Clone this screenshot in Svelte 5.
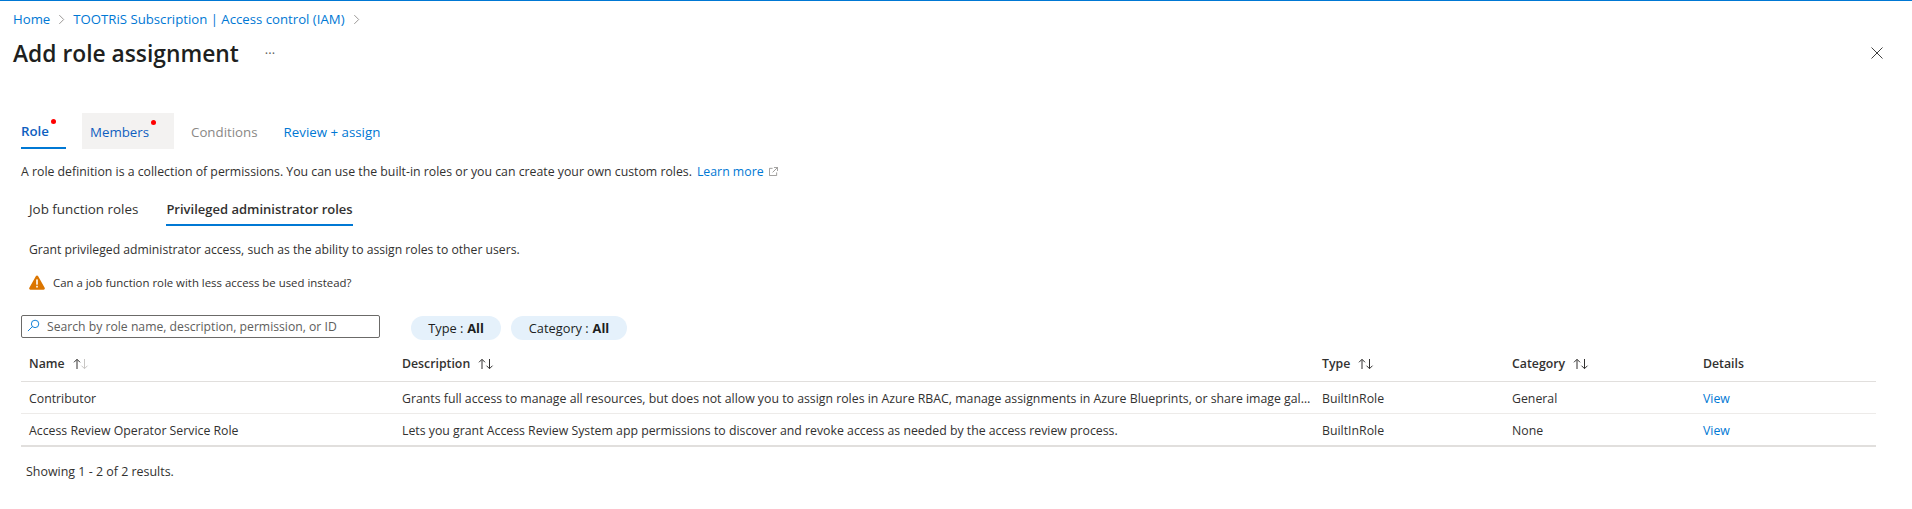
<script lang="ts">
  const tabs = [
    { label: 'Role', dot: true, cls: 'active' },
    { label: 'Members', dot: true, cls: 'hover' },
    { label: 'Conditions', dot: false, cls: 'off' },
    { label: 'Review + assign', dot: false, cls: 'review' }
  ];

  const columns = [
    { label: 'Name', sort: true, faint: true },
    { label: 'Description', sort: true, faint: false },
    { label: 'Type', sort: true, faint: false },
    { label: 'Category', sort: true, faint: false },
    { label: 'Details', sort: false, faint: false }
  ];

  const roles = [
    {
      name: 'Contributor',
      description:
        'Grants full access to manage all resources, but does not allow you to assign roles in Azure RBAC, manage assignments in Azure Blueprints, or share image galleries.',
      type: 'BuiltInRole',
      category: 'General'
    },
    {
      name: 'Access Review Operator Service Role',
      description:
        'Lets you grant Access Review System app permissions to discover and revoke access as needed by the access review process.',
      type: 'BuiltInRole',
      category: 'None'
    }
  ];
</script>

<div class="page">
  <nav class="crumbs">
    <a href="#home">Home</a>
    <svg class="chev" viewBox="0 0 8 12"><path d="M1.5 1l5 5-5 5" /></svg>
    <a href="#iam">TOOTRiS Subscription | Access control (IAM)</a>
    <svg class="chev" viewBox="0 0 8 12"><path d="M1.5 1l5 5-5 5" /></svg>
  </nav>

  <header class="title-row">
    <h1>Add role assignment</h1>
    <span class="more">···</span>
    <svg class="close" viewBox="0 0 12 12"><path d="M.5.5l11 11M11.5.5l-11 11" /></svg>
  </header>

  <div class="tabs">
    {#each tabs as tab}
      <div class="tab {tab.cls}">
        <span class="tab-label">{tab.label}{#if tab.dot}<i class="dot"></i>{/if}</span>
      </div>
    {/each}
  </div>

  <p class="intro">
    <span>A role definition is a collection of permissions. You can use the built-in roles or you can create your own custom roles.</span>
    <a href="#learn">Learn more</a>
    <svg class="ext" viewBox="0 0 10 10"><path d="M4 1.5H.5v8h8V6M5.5.5h4v4M9.3.7L4 6" /></svg>
  </p>

  <div class="subtabs">
    <span class="subtab">Job function roles</span>
    <span class="subtab selected">Privileged administrator roles</span>
  </div>

  <p class="grant">Grant privileged administrator access, such as the ability to assign roles to other users.</p>

  <div class="warn">
    <svg viewBox="0 0 14 13">
      <path class="tri" d="M7 .3c.4 0 .7.2.9.5l5.8 10.4c.4.7-.1 1.6-.9 1.6H1.2c-.8 0-1.3-.9-.9-1.6L6.1.8C6.3.5 6.6.3 7 .3z" />
      <rect class="bang" x="6.3" y="3.8" width="1.4" height="4.6" />
      <rect class="bang" x="6.3" y="9.4" width="1.4" height="1.5" />
    </svg>
    <span>Can a job function role with less access be used instead?</span>
  </div>

  <div class="filters">
    <div class="search">
      <svg viewBox="0 0 14 14"><circle cx="8.7" cy="5.3" r="4" /><path d="M5.8 8.2L1 13" /></svg>
      <span>Search by role name, description, permission, or ID</span>
    </div>
    <div class="pills">
      <span class="pill type">Type : <b>All</b></span>
      <span class="pill">Category : <b>All</b></span>
    </div>
  </div>

  <div class="table">
    <div class="row head">
      {#each columns as col}
        <div class="cell">
          {col.label}
          {#if col.sort}
            <svg class="sort" viewBox="0 0 16 12">
              <path d="M4 11V1.5M1 4.3l3-3 3 3" />
              <path class:faint={col.faint} d="M11.5 1v9.5M8.5 7.7l3 3 3-3" />
            </svg>
          {/if}
        </div>
      {/each}
    </div>
    {#each roles as role}
      <div class="row">
        <div class="cell">{role.name}</div>
        <div class="cell desc">{role.description}</div>
        <div class="cell">{role.type}</div>
        <div class="cell">{role.category}</div>
        <div class="cell"><a href="#view">View</a></div>
      </div>
    {/each}
  </div>

  <p class="results">Showing 1 - 2 of 2 results.</p>
</div>

<style>
  :global(body) {
    margin: 0;
    background: #fff;
  }

  .page {
    height: 509px;
    box-sizing: border-box;
    overflow: hidden;
    border-top: 1px solid #0078d4;
    font-family: "Open Sans", "Noto Sans", sans-serif;
    font-size: 12.2px;
    color: #323130;
  }

  a {
    color: #0078d4;
    text-decoration: none;
  }

  p {
    margin: 0;
  }

  .crumbs {
    display: flex;
    align-items: center;
    gap: 8px;
    height: 18px;
    margin: 9px 0 0 13px;
    font-size: 13.2px;
  }

  .chev {
    width: 7px;
    height: 11px;
    fill: none;
    stroke: #8a8886;
    stroke-width: 1;
  }

  .title-row {
    display: flex;
    align-items: center;
    height: 34px;
    margin: 8px 29px 0 13px;
  }

  h1 {
    margin: 0;
    font-size: 22.8px;
    font-weight: 600;
    color: #201f1e;
  }

  .more {
    margin-left: 26px;
    font-size: 13px;
    color: #605e5c;
  }

  .close {
    width: 12px;
    height: 12px;
    margin-left: auto;
    stroke: #404040;
    stroke-width: 1;
  }

  .tabs {
    display: flex;
    margin: 43px 0 0 21px;
    height: 36px;
  }

  .tab {
    display: flex;
    align-items: center;
    box-sizing: border-box;
    padding-top: 2px;
    font-size: 13.3px;
    color: #0078d4;
  }

  .tab.active {
    width: 45px;
    margin-right: 16px;
    border-bottom: 2px solid #0078d4;
    color: #0f5fc0;
    font-weight: 600;
  }

  .tab.hover {
    width: 92px;
    margin-right: 17px;
    padding-left: 8px;
    background: #f3f2f1;
    color: #0f5fc0;
  }

  .tab.off {
    margin-right: 26px;
    color: #8a8886;
  }

  .tab-label {
    position: relative;
  }

  .dot {
    position: absolute;
    top: -3px;
    right: -7px;
    width: 5px;
    height: 5px;
    border-radius: 50%;
    background: #f00;
  }

  .intro {
    display: flex;
    align-items: center;
    gap: 5px;
    height: 20px;
    margin: 12px 0 0 21px;
    font-size: 12.3px;
    white-space: nowrap;
  }

  .ext {
    width: 9px;
    height: 9px;
    fill: none;
    stroke: #8a8886;
    stroke-width: .9;
  }

  .subtabs {
    display: flex;
    gap: 28px;
    margin: 18px 0 0 29px;
    font-size: 13.4px;
  }

  .subtab {
    height: 20px;
    padding-bottom: 5px;
    line-height: 20px;
  }

  .subtab.selected {
    font-size: 13px;
    font-weight: 600;
    border-bottom: 2px solid #0078d4;
  }

  .grant {
    height: 20px;
    margin: 14px 0 0 29px;
    line-height: 20px;
  }

  .warn {
    display: flex;
    align-items: center;
    gap: 8px;
    height: 20px;
    margin: 12px 0 0 29px;
    font-size: 11.4px;
  }

  .warn svg {
    width: 16px;
    height: 15px;
  }

  .tri {
    fill: #db7500;
  }

  .bang {
    fill: #fff;
  }

  .filters {
    display: flex;
    align-items: flex-start;
    gap: 31px;
    height: 26px;
    margin: 23px 0 0 21px;
  }

  .search {
    display: flex;
    align-items: center;
    gap: 7px;
    width: 359px;
    height: 23px;
    box-sizing: border-box;
    padding-left: 5px;
    border: 1px solid #6b6a68;
    border-radius: 2px;
    color: #605e5c;
  }

  .search svg {
    width: 13px;
    height: 13px;
    margin-top: -3px;
    fill: none;
    stroke: #0078d4;
    stroke-width: 1;
  }

  .pills {
    display: flex;
    gap: 10px;
    padding-top: 1px;
  }

  .pill {
    display: flex;
    justify-content: center;
    gap: .3em;
    width: 116px;
    height: 24px;
    border-radius: 12px;
    background: #e5f1fb;
    color: #201f1e;
    font-size: 12.8px;
    line-height: 24px;
  }

  .pill.type {
    width: 90px;
  }

  .pill b {
    font-weight: 700;
  }

  .table {
    width: 1855px;
    margin: 4px 0 0 21px;
  }

  .row {
    display: grid;
    grid-template-columns: 373px 920px 190px 191px 181px;
    align-items: center;
    height: 32px;
    box-sizing: border-box;
    padding-top: 1px;
    border-bottom: 1px solid #edebe9;
    font-size: 12.3px;
  }

  .row:last-child {
    height: 33px;
    border-bottom: 2px solid #e1dfdd;
  }

  .row.head {
    height: 37px;
    border-bottom: 1px solid #e1dfdd;
    font-weight: 600;
  }

  .cell {
    display: flex;
    align-items: center;
    min-width: 0;
    padding-left: 8px;
    white-space: nowrap;
  }

  .desc {
    display: block;
    overflow: hidden;
    text-overflow: ellipsis;
    padding-right: 2px;
  }

  .sort {
    width: 16px;
    height: 12px;
    margin-left: 8px;
    fill: none;
    stroke: #323130;
    stroke-width: 1;
  }

  .sort .faint {
    stroke: #c8c6c4;
  }

  .results {
    height: 20px;
    margin: 15px 0 0 26px;
    font-size: 12.45px;
    line-height: 20px;
  }
</style>
